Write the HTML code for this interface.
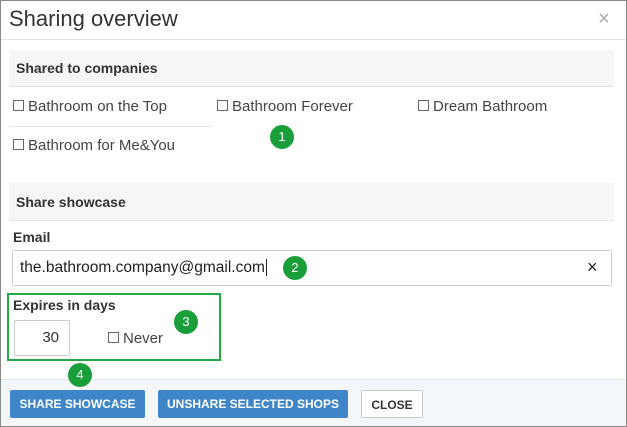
<!DOCTYPE html>
<html><head><style>
*{box-sizing:border-box;margin:0;padding:0}
body{width:627px;height:427px;overflow:hidden;background:#fff;font-family:"Liberation Sans",sans-serif;position:relative;color:#333}
.a{position:absolute}
.frame{left:0;top:0;width:627px;height:427px;border:1px solid #888}
.cb{display:inline-block;width:11px;height:11px;border:1px solid #666;vertical-align:0px;margin-right:4px;background:#fff}
.t{font-size:15px;color:#444}
.g{background:#1a9e3a;color:#fff;border-radius:50%;width:24px;height:24px;text-align:center;line-height:24px;font-size:13px}
.h{font-size:14px;font-weight:bold;color:#333}
.btn{background:#3f86c8;color:#fff;font-size:12px;font-weight:bold;height:28px;line-height:28px;text-align:center;border-radius:2px}
</style></head><body>
<div class="a frame"></div>
<div class="a" style="left:9px;top:6px;font-size:22px;color:#333">Sharing overview</div>
<div class="a" style="left:598px;top:8px;font-size:20px;color:#aaa">×</div>
<div class="a" style="left:1px;top:39px;width:625px;height:1px;background:#e3e3e3"></div>
<div class="a" style="left:9px;top:50px;width:605px;height:37px;background:#f5f6f8;border-bottom:1px solid #e0e0e0"></div>
<div class="a h" style="left:16px;top:60px">Shared to companies</div>
<div class="a t" style="left:13px;top:98px"><span class="cb"></span>Bathroom on the Top</div>
<div class="a t" style="left:217px;top:98px"><span class="cb"></span>Bathroom Forever</div>
<div class="a t" style="left:418px;top:98px"><span class="cb"></span>Dream Bathroom</div>
<div class="a" style="left:9px;top:126px;width:203px;height:1px;background:#e5e5e5"></div>
<div class="a t" style="left:13px;top:137px"><span class="cb"></span>Bathroom for Me&amp;You</div>
<div class="a g" style="left:270px;top:125px">1</div>
<div class="a" style="left:9px;top:183px;width:605px;height:38px;background:#f5f6f8;border-bottom:1px solid #e8e8e8"></div>
<div class="a h" style="left:16px;top:194px">Share showcase</div>
<div class="a h" style="left:13px;top:229px">Email</div>
<div class="a" style="left:12px;top:250px;width:600px;height:36px;border:1px solid #ccc;border-radius:2px"></div>
<div class="a" style="left:20px;top:259px;font-size:15.5px;color:#222">the.bathroom.company@gmail.com<span style="border-left:1px solid #222;margin-left:1px"></span></div>
<div class="a" style="left:587px;top:257px;font-size:18px;color:#222">×</div>
<div class="a g" style="left:283px;top:256px">2</div>
<div class="a" style="left:7px;top:293px;width:214px;height:68px;border:2px solid #22aa44"></div>
<div class="a h" style="left:13px;top:297px">Expires in days</div>
<div class="a" style="left:14px;top:320px;width:56px;height:36px;border:1px solid #ccc;border-radius:2px;text-align:right;padding-right:10px;line-height:34px;font-size:15px">30</div>
<div class="a t" style="left:108px;top:330px"><span class="cb"></span>Never</div>
<div class="a g" style="left:174px;top:310px">3</div>
<div class="a" style="left:1px;top:379px;width:625px;height:47px;background:#f4f7fa;border-top:1px solid #e3e7ec"></div>
<div class="a g" style="left:68px;top:363px">4</div>
<div class="a btn" style="left:10px;top:390px;width:135px">SHARE SHOWCASE</div>
<div class="a btn" style="left:158px;top:390px;width:190px">UNSHARE SELECTED SHOPS</div>
<div class="a btn" style="left:361px;top:390px;width:62px;background:#fff;color:#333;border:1px solid #ccc">CLOSE</div>
</body></html>
